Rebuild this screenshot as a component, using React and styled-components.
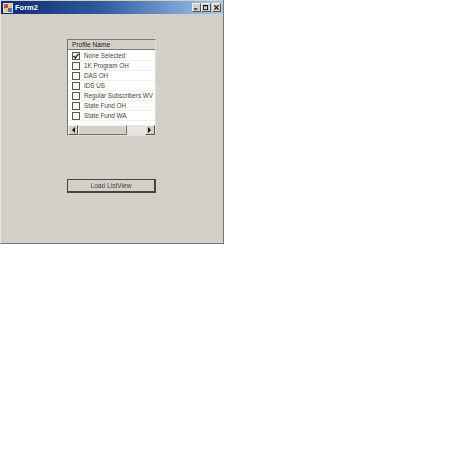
import React from 'react';
import styled, { createGlobalStyle } from 'styled-components';

const GlobalStyle = createGlobalStyle`
  html, body {
    margin: 0;
    padding: 0;
    background: #fff;
    font-family: "Liberation Sans", Arial, sans-serif;
  }
`;

const Window = styled.div`
  width: 224px;
  height: 244px;
  box-sizing: border-box;
  background: #d4d0c8;
  border-right: 1px solid #777;
  border-bottom: 1px solid #777;
  border-left: 1px solid #e8e6e0;
  display: flex;
  flex-direction: column;
`;

const TitleBar = styled.div`
  height: 13px;
  margin-top: 1px;
  padding: 0 2px;
  display: flex;
  align-items: center;
  gap: 2px;
  background: linear-gradient(90deg, #0e2a6e 0%, #2f5a9e 45%, #a6caf0 100%);
`;

const AppIcon = styled.svg`
  width: 10px;
  height: 10px;
  flex: none;
`;

const Title = styled.span`
  flex: 1;
  color: #fff;
  font-size: 7.5px;
  font-weight: bold;
`;

const CaptionButtons = styled.div`
  display: flex;
`;

const CaptionButton = styled.div`
  width: 9.5px;
  height: 9px;
  margin-left: ${p => (p.$gap ? '1px' : '0')};
  box-sizing: border-box;
  background: #d4d0c8;
  border: 1px solid;
  border-color: #f2f0ea #555 #555 #f2f0ea;
  display: flex;
  align-items: center;
  justify-content: center;
`;

const Client = styled.div`
  flex: 1;
  padding: 25px 0 0 66px;
  display: flex;
  flex-direction: column;
  align-items: flex-start;
`;

const ListView = styled.div`
  width: 89px;
  height: 97px;
  box-sizing: border-box;
  background: #fff;
  border: 1px solid;
  border-color: #777 #ddd #ddd #777;
  display: flex;
  flex-direction: column;
  overflow: hidden;
`;

const HeaderCell = styled.div`
  height: 9px;
  flex: none;
  padding-left: 4px;
  font-size: 6.6px;
  line-height: 10px;
  color: #222;
  background: #d4d0c8;
  border-bottom: 1px solid #777;
  white-space: nowrap;
`;

const Rows = styled.div`
  flex: 1;
  padding-top: 1px;
`;

const Row = styled.div`
  height: 10px;
  box-sizing: border-box;
  display: flex;
  align-items: center;
  padding-left: 4px;
  gap: 4px;
  font-size: 6.3px;
  color: #444;
  white-space: nowrap;
  border-bottom: 1px solid #f0f0ec;
`;

const CheckBox = styled.span`
  width: 8px;
  height: 8px;
  flex: none;
  box-sizing: border-box;
  border: 1px solid #555;
  background: #f4f4f0;
  display: flex;
  align-items: center;
  justify-content: center;
`;

const ScrollBar = styled.div`
  height: 10px;
  flex: none;
  display: flex;
  background: #e6e4de;
`;

const ScrollArrow = styled.div`
  width: 10px;
  box-sizing: border-box;
  background: #d4d0c8;
  border: 1px solid;
  border-color: #f2f0ea #555 #555 #f2f0ea;
  display: flex;
  align-items: center;
  justify-content: center;
`;

const ScrollThumb = styled.div`
  width: 49px;
  box-sizing: border-box;
  background: #d4d0c8;
  border: 1px solid;
  border-color: #f2f0ea #777 #777 #f2f0ea;
`;

const ScrollTrack = styled.div`
  flex: 1;
`;

const Arrow = styled.svg`
  width: 4px;
  height: 6px;
`;

const LoadButton = styled.button`
  margin-top: 43px;
  width: 89px;
  height: 14px;
  padding: 0;
  box-sizing: border-box;
  background: #d4d0c8;
  border: 1px solid #444;
  border-right-width: 2px;
  border-bottom-width: 2px;
  font-family: inherit;
  font-size: 6.6px;
  color: #444;
`;

const profiles = [
  ['None Selected', true],
  ['1K Program OH', false],
  ['DAS OH', false],
  ['IDS US', false],
  ['Regular Subscribers WV', false],
  ['State Fund OH', false],
  ['State Fund WA', false],
];

export default function App() {
  return (
    <>
      <GlobalStyle />
      <Window>
        <TitleBar>
          <AppIcon viewBox="0 0 10 10">
            <rect x="0.5" y="0.5" width="9" height="9" fill="#e8c878" stroke="#ddd" />
            <rect x="1" y="1" width="4" height="4" fill="#c05050" />
            <rect x="5" y="5" width="4" height="4" fill="#5070c0" />
          </AppIcon>
          <Title>Form2</Title>
          <CaptionButtons>
            <CaptionButton>
              <svg width="5" height="5" viewBox="0 0 6 6"><rect x="0" y="4" width="4" height="1.5" fill="#111" /></svg>
            </CaptionButton>
            <CaptionButton>
              <svg width="5" height="5" viewBox="0 0 6 6"><rect x="0.5" y="0.5" width="5" height="5" fill="none" stroke="#111" /><rect x="0" y="0" width="6" height="1.5" fill="#111" /></svg>
            </CaptionButton>
            <CaptionButton $gap>
              <svg width="5" height="5" viewBox="0 0 6 6"><path d="M0.5 0.5L5.5 5.5M5.5 0.5L0.5 5.5" stroke="#111" strokeWidth="1.4" /></svg>
            </CaptionButton>
          </CaptionButtons>
        </TitleBar>
        <Client>
          <ListView>
            <HeaderCell>Profile Name</HeaderCell>
            <Rows>
              {profiles.map(([name, checked]) => (
                <Row key={name}>
                  <CheckBox>
                    {checked && (
                      <svg width="6" height="6" viewBox="0 0 6 6"><path d="M0.5 3L2.3 5L5.5 0.8" fill="none" stroke="#222" strokeWidth="1.4" /></svg>
                    )}
                  </CheckBox>
                  {name}
                </Row>
              ))}
            </Rows>
            <ScrollBar>
              <ScrollArrow>
                <Arrow viewBox="0 0 4 6"><path d="M4 0V6L1 3Z" fill="#111" /></Arrow>
              </ScrollArrow>
              <ScrollThumb />
              <ScrollTrack />
              <ScrollArrow>
                <Arrow viewBox="0 0 4 6"><path d="M0 0V6L3 3Z" fill="#111" /></Arrow>
              </ScrollArrow>
            </ScrollBar>
          </ListView>
          <LoadButton>Load ListView</LoadButton>
        </Client>
      </Window>
    </>
  );
}
